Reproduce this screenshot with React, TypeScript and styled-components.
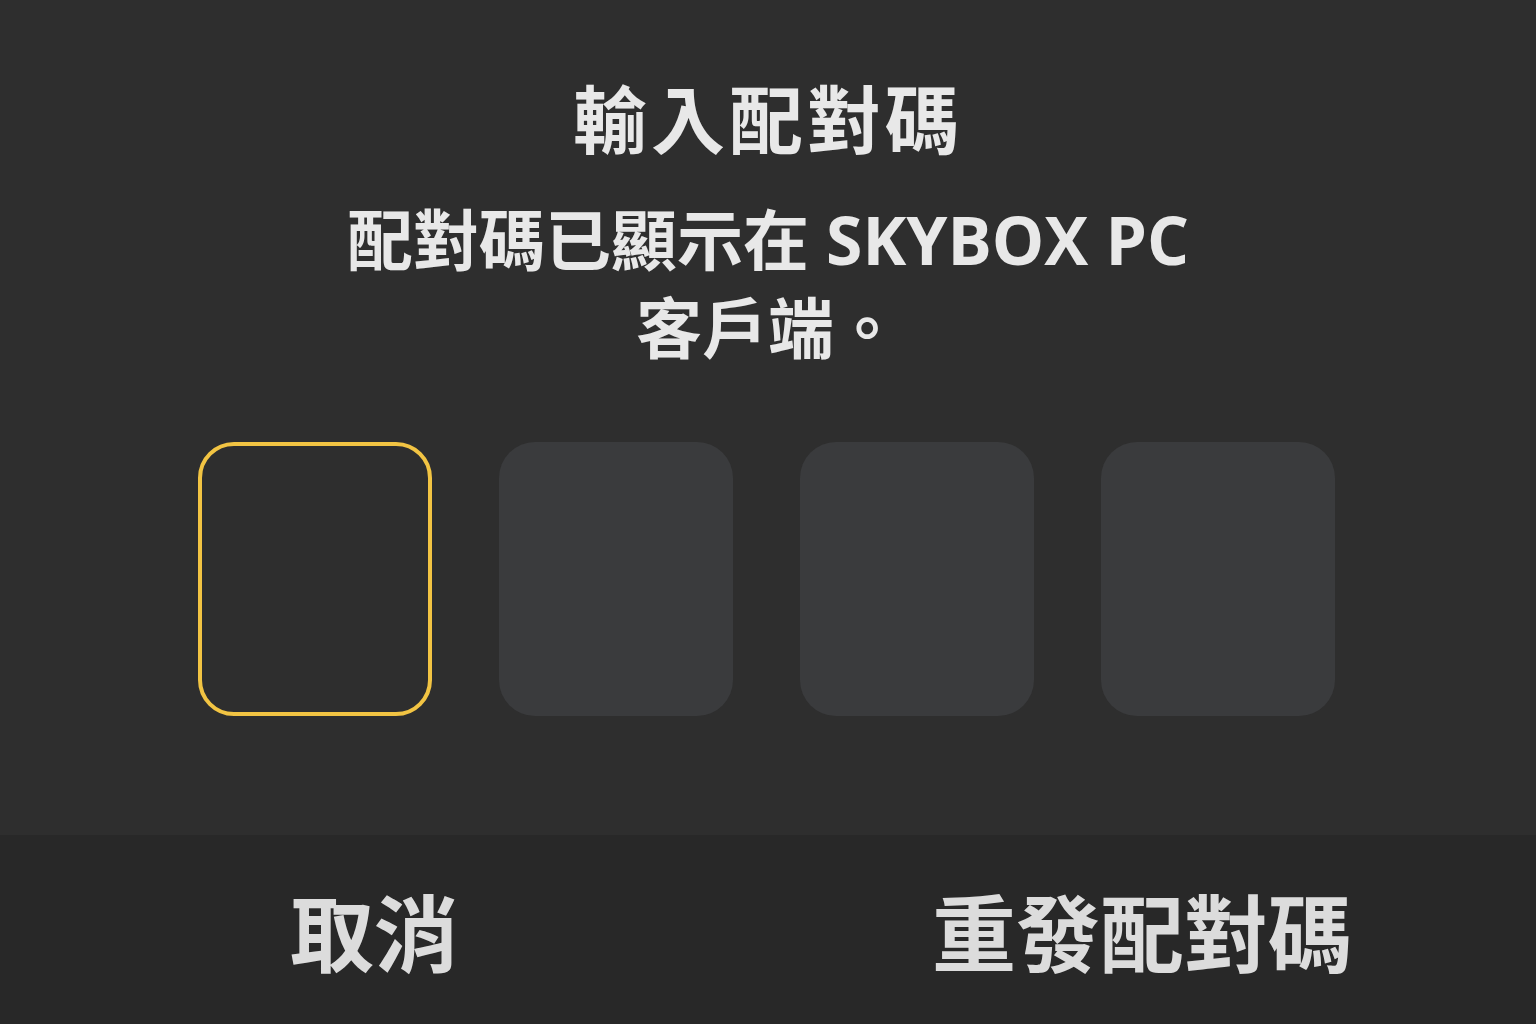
import React from "react";
import styled, { createGlobalStyle } from "styled-components";

const GlobalStyle = createGlobalStyle`
  html, body {
    margin: 0;
    padding: 0;
    background: #2e2e2e;
  }
  #root {
    height: 1024px;
  }
`;

const PairCodeDialog = () => {
  const slots = [0, 1, 2, 3];
  const activeSlot = 0;

  return (
    <>
      <GlobalStyle />
      <Screen>
        <Body>
          <Title>輸入配對碼</Title>
          <Subtitle>
            配對碼已顯示在 SKYBOX PC
            <br />
            客戶端。
          </Subtitle>
          <CodeRow>
            {slots.map((i) => (
              <CodeSlot key={i} $active={i === activeSlot} />
            ))}
          </CodeRow>
        </Body>
        <ActionBar>
          <ActionButton>取消</ActionButton>
          <ActionButton>重發配對碼</ActionButton>
        </ActionBar>
      </Screen>
    </>
  );
};

export default PairCodeDialog;

const Screen = styled.div`
  height: 1024px;
  display: flex;
  flex-direction: column;
  background: #2e2e2e;
  font-family: "Open Sans", "Noto Sans CJK TC", sans-serif;
  color: #e8e8e8;
`;
const Body = styled.div`
  height: 835px;
  display: flex;
  flex-direction: column;
  align-items: center;
  box-sizing: border-box;
  padding-top: 68px;
`;
const Title = styled.h1`
  margin: 0;
  font-family: "Noto Sans CJK TC", sans-serif;
  font-size: 74px;
  line-height: 96px;
  font-weight: 700;
  letter-spacing: 4px;
`;
const Subtitle = styled.p`
  margin: 31px 0 0;
  font-size: 66px;
  line-height: 88px;
  font-weight: 700;
  text-align: center;
`;
const CodeRow = styled.div`
  display: flex;
  gap: 67px;
  margin-top: 71px;
  margin-right: 4px;
`;
const CodeSlot = styled.div<{ $active: boolean }>`
  width: 234px;
  height: 274px;
  box-sizing: border-box;
  border-radius: 36px;
  background: ${(p) => (p.$active ? "transparent" : "#3a3b3d")};
  border: ${(p) => (p.$active ? "4px solid #f2c443" : "none")};
`;
const ActionBar = styled.div`
  flex: 1;
  display: grid;
  grid-template-columns: 1fr 1fr;
  align-items: center;
  background: #282828;
`;
const ActionButton = styled.button`
  background: none;
  border: none;
  padding: 0 20px 0 0;
  font-family: "Noto Sans CJK TC", sans-serif;
  font-size: 84px;
  font-weight: 700;
  color: #dcdcdc;
  text-align: center;
`;
